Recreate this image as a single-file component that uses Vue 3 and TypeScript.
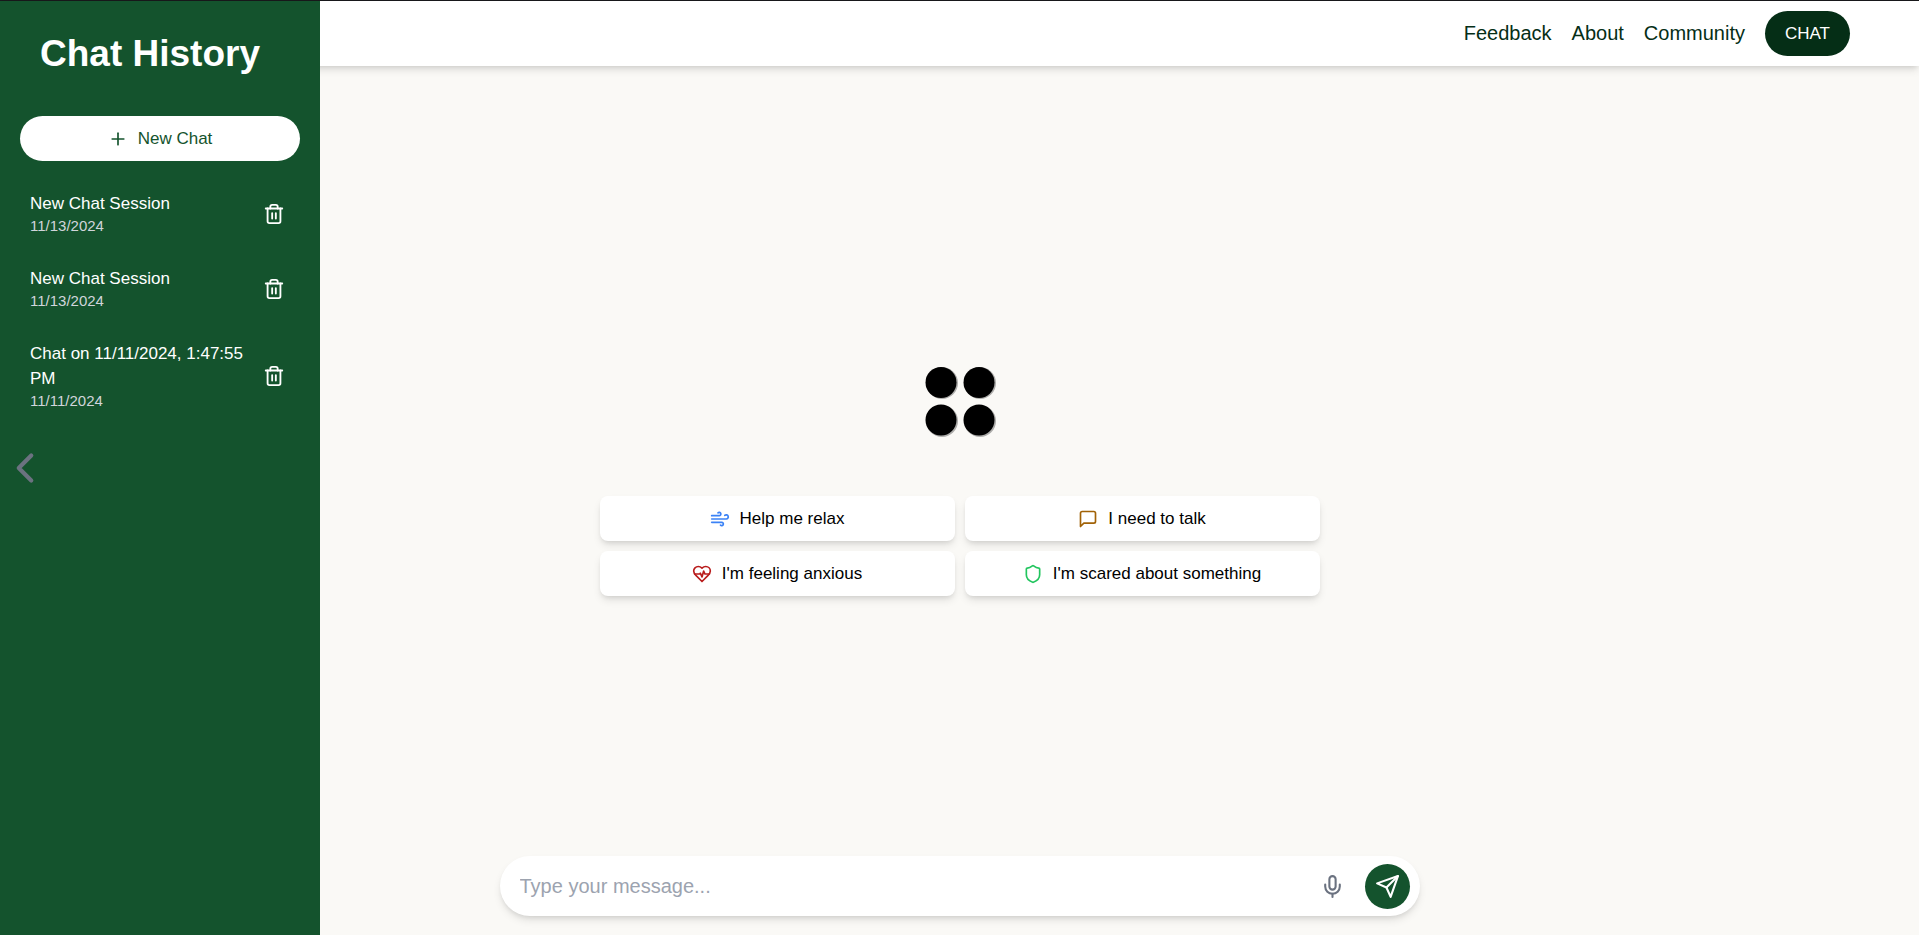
<script setup lang="ts">
import { ref } from 'vue'

interface Session {
  id: number
  title: string
  date: string
}

interface Suggestion {
  label: string
  color: string
  paths: string[]
}

const sessions = ref<Session[]>([
  { id: 1, title: 'New Chat Session', date: '11/13/2024' },
  { id: 2, title: 'New Chat Session', date: '11/13/2024' },
  { id: 3, title: 'Chat on 11/11/2024, 1:47:55 PM', date: '11/11/2024' },
])

const links = ['Feedback', 'About', 'Community']

const suggestions: Suggestion[] = [
  {
    label: 'Help me relax',
    color: 'blue',
    paths: [
      'M17.7 7.7a2.5 2.5 0 1 1 1.8 4.3H2',
      'M9.6 4.6A2 2 0 1 1 11 8H2',
      'M12.6 19.4A2 2 0 1 0 14 16H2',
    ],
  },
  {
    label: 'I need to talk',
    color: 'amber',
    paths: ['M21 15a2 2 0 0 1-2 2H7l-4 4V5a2 2 0 0 1 2-2h14a2 2 0 0 1 2 2z'],
  },
  {
    label: "I'm feeling anxious",
    color: 'red',
    paths: [
      'M19 14c1.49-1.46 3-3.21 3-5.5A5.5 5.5 0 0 0 16.5 3c-1.76 0-3 .5-4.5 2-1.5-1.5-2.74-2-4.5-2A5.5 5.5 0 0 0 2 8.5c0 2.3 1.5 4.05 3 5.5l7 7Z',
      'M3.22 12H9.5l.5-1 2 4.5 2-7 1.5 3.5h5.27',
    ],
  },
  {
    label: "I'm scared about something",
    color: 'green',
    paths: [
      'M20 13c0 5-3.5 7.5-7.66 8.95a1 1 0 0 1-.67-.01C7.5 20.5 4 18 4 13V6a1 1 0 0 1 1-1c2 0 4.5-1.2 6.24-2.72a1.17 1.17 0 0 1 1.52 0C14.51 3.81 17 5 19 5a1 1 0 0 1 1 1z',
    ],
  },
]

const message = ref('')

function newChat() {
  sessions.value.unshift({
    id: Date.now(),
    title: 'New Chat Session',
    date: new Date().toLocaleDateString('en-US'),
  })
}

function removeSession(id: number) {
  sessions.value = sessions.value.filter((s) => s.id !== id)
}
</script>

<template>
  <div class="app">
    <div class="page">
      <header class="topbar">
        <nav class="nav">
          <a v-for="link in links" :key="link" class="nav-link" href="#">{{ link }}</a>
          <button class="chat-button" type="button">CHAT</button>
        </nav>
      </header>

      <main class="main">
        <section class="welcome">
          <svg class="logo" viewBox="0 0 150 150" aria-hidden="true">
            <g class="logo-shade">
              <circle cx="57" cy="57" r="16" />
              <circle cx="95" cy="57" r="16" />
              <circle cx="57" cy="95" r="16" />
              <circle cx="95" cy="95" r="16" />
            </g>
            <circle cx="56" cy="56.5" r="15.5" />
            <circle cx="94" cy="56.5" r="15.5" />
            <circle cx="56" cy="94" r="15.5" />
            <circle cx="94" cy="94" r="15.5" />
          </svg>
          <div class="suggestions">
            <button v-for="item in suggestions" :key="item.label" class="suggestion" type="button">
              <svg class="icon small" :class="item.color" viewBox="0 0 24 24" aria-hidden="true">
                <path v-for="d in item.paths" :key="d" :d="d" />
              </svg>
              {{ item.label }}
            </button>
          </div>
        </section>

        <form class="composer" @submit.prevent="message = ''">
          <input
            v-model="message"
            class="message"
            type="text"
            placeholder="Type your message..."
            aria-label="Message"
          />
          <button class="mic" type="button" aria-label="Record voice message">
            <svg class="icon large" viewBox="0 0 24 24" aria-hidden="true">
              <path d="M12 2a3 3 0 0 0-3 3v7a3 3 0 0 0 6 0V5a3 3 0 0 0-3-3Z" />
              <path d="M19 10v2a7 7 0 0 1-14 0v-2" />
              <path d="M12 19v3" />
            </svg>
          </button>
          <button class="send" type="submit" aria-label="Send">
            <svg class="icon large" viewBox="0 0 24 24" aria-hidden="true">
              <path d="m22 2-7 20-4-9-9-4Z" />
              <path d="M22 2 11 13" />
            </svg>
          </button>
        </form>
      </main>
    </div>

    <aside class="sidebar">
      <h1 class="title">Chat History</h1>
      <button class="new-chat" type="button" @click="newChat">
        <svg class="icon small" viewBox="0 0 24 24" aria-hidden="true">
          <path d="M5 12h14" />
          <path d="M12 5v14" />
        </svg>
        New Chat
      </button>
      <ul class="sessions">
        <li v-for="session in sessions" :key="session.id" class="session">
          <div class="session-text">
            <div class="session-title">{{ session.title }}</div>
            <div class="session-date">{{ session.date }}</div>
          </div>
          <button
            class="delete"
            type="button"
            :aria-label="`Delete ${session.title}`"
            @click="removeSession(session.id)"
          >
            <svg class="icon medium" viewBox="0 0 24 24" aria-hidden="true">
              <path d="M3 6h18" />
              <path d="M19 6v14c0 1-1 2-2 2H7c-1 0-2-1-2-2V6" />
              <path d="M8 6V4c0-1 1-2 2-2h4c1 0 2 1 2 2v2" />
              <path d="M10 11v6" />
              <path d="M14 11v6" />
            </svg>
          </button>
        </li>
      </ul>
      <button class="collapse" type="button" aria-label="Collapse sidebar">
        <svg class="icon" viewBox="0 0 24 24" aria-hidden="true">
          <path d="m15 18-6-6 6-6" />
        </svg>
      </button>
    </aside>
  </div>
</template>

<style>
body {
  margin: 0;
  background: #faf9f6;
}
</style>

<style scoped>
.app {
  box-sizing: border-box;
  display: grid;
  grid-template-columns: 320px 1fr;
  min-height: 100vh;
  border-top: 1px solid #18181b;
  font-family: 'Liberation Sans', Arial, sans-serif;
  font-size: 17px;
  line-height: 25px;
}

button,
input {
  margin: 0;
  padding: 0;
  border: 0;
  background: none;
  color: inherit;
  font: inherit;
}

button {
  cursor: pointer;
}

.icon {
  display: block;
  flex: none;
  fill: none;
  stroke: currentColor;
  stroke-width: 2;
  stroke-linecap: round;
  stroke-linejoin: round;
}

.small {
  width: 20px;
  height: 20px;
}

.medium {
  width: 22px;
  height: 22px;
}

.large {
  width: 25px;
  height: 25px;
}

.blue {
  color: #3b82f6;
}

.amber {
  color: #a16207;
}

.red {
  color: #b91c1c;
}

.green {
  color: #22c55e;
}

/* The page fills the whole grid; the sidebar covers its first column. */
.page {
  grid-area: 1 / 1 / 2 / 3;
  display: flex;
  flex-direction: column;
  background: #faf9f6;
}

.sidebar {
  grid-area: 1 / 1 / 2 / 2;
  z-index: 1;
  position: relative;
  padding: 30px 20px;
  background: #14532d;
  color: #fff;
}

.topbar {
  display: flex;
  justify-content: flex-end;
  padding: 10px 69px 10px 20px;
  background: #fff;
  box-shadow: 0 5px 8px -1px rgb(0 0 0 / 0.1), 0 3px 5px -2px rgb(0 0 0 / 0.1);
}

.nav {
  display: flex;
  align-items: center;
  gap: 20px;
}

.nav-link {
  color: #052e16;
  font-size: 20px;
  text-decoration: none;
}

.chat-button {
  padding: 10px 20px;
  border-radius: 24px;
  background: #052e16;
  color: #fff;
}

.main {
  flex: 1;
  display: flex;
  flex-direction: column;
  align-items: center;
  padding: 0 20px 19px;
}

.welcome {
  flex: 1;
  display: flex;
  flex-direction: column;
  align-items: center;
  justify-content: center;
  gap: 20px;
  width: 100%;
  max-width: 720px;
}

.logo {
  width: 150px;
  height: 150px;
}

.logo-shade {
  opacity: 0.3;
}

.suggestions {
  display: grid;
  grid-template-columns: 1fr 1fr;
  gap: 10px;
  width: 100%;
}

.suggestion {
  display: flex;
  align-items: center;
  justify-content: center;
  gap: 10px;
  padding: 10px 20px;
  border-radius: 8px;
  background: #fff;
  color: #000;
  box-shadow: 0 5px 8px -1px rgb(0 0 0 / 0.1), 0 3px 5px -2px rgb(0 0 0 / 0.1);
}

.composer {
  box-sizing: border-box;
  display: flex;
  align-items: center;
  gap: 20px;
  width: 100%;
  max-width: 920px;
  height: 60px;
  padding: 0 10px 0 20px;
  border-radius: 30px;
  background: #fff;
  box-shadow: 0 5px 8px -1px rgb(0 0 0 / 0.1), 0 3px 5px -2px rgb(0 0 0 / 0.1);
}

.message {
  flex: 1;
  min-width: 0;
  outline: none;
  color: #052e16;
  font-size: 20px;
  line-height: 30px;
}

.message::placeholder {
  color: #9ca3af;
  opacity: 1;
}

.mic {
  color: #6b7280;
}

.send {
  padding: 10px;
  border-radius: 50%;
  background: #14532d;
  color: #fff;
}

.title {
  margin: 0 20px 40px;
  font-size: 37px;
  line-height: 45px;
  font-weight: 700;
  white-space: nowrap;
}

.new-chat {
  display: flex;
  align-items: center;
  justify-content: center;
  gap: 10px;
  width: 100%;
  padding: 10px 20px;
  border-radius: 24px;
  background: #fff;
  color: #14532d;
}

.sessions {
  display: flex;
  flex-direction: column;
  gap: 10px;
  margin: 20px 0 0;
  padding: 0;
  list-style: none;
}

.session {
  display: flex;
  align-items: center;
  justify-content: space-between;
  padding: 10px;
}

.session-date {
  color: #d1d5db;
  font-size: 15px;
  line-height: 20px;
}

.delete {
  padding: 5px;
}

.collapse {
  position: absolute;
  top: 50%;
  left: 0;
  width: 50px;
  height: 50px;
  margin-top: -25px;
  color: #6b7280;
}
</style>
